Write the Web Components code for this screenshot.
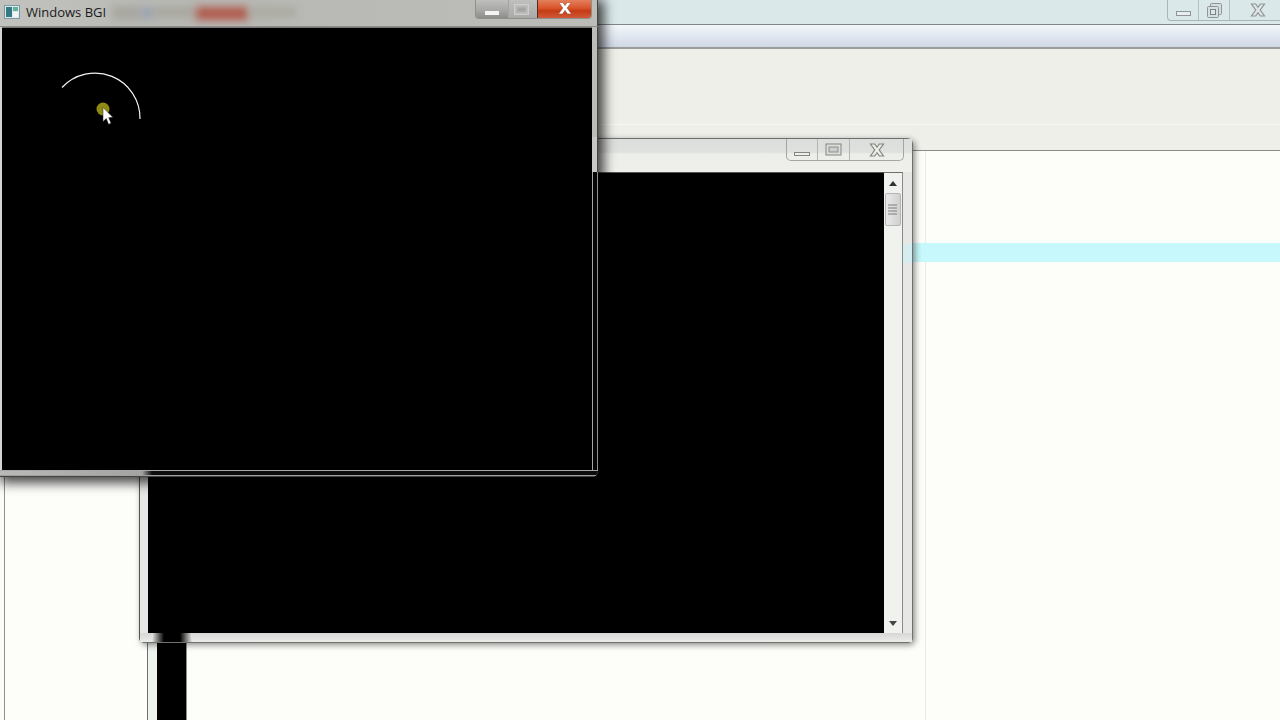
<!DOCTYPE html>
<html><head><meta charset="utf-8"><title>Windows BGI</title>
<style>html,body{margin:0;padding:0;background:#fdfefa;overflow:hidden}</style></head>
<body>
<x-desktop>
  <x-ide-window></x-ide-window>
  <x-console-window></x-console-window>
  <x-bgi-window title-text="Windows BGI"></x-bgi-window>
</x-desktop>
<script>
function def(name, css, html){
  customElements.define(name, class extends HTMLElement{
    constructor(){super();const r=this.attachShadow({mode:'open'});r.innerHTML='<style>'+css+'</style>'+(typeof html==='function'?html(this):html);}
  });
}
const XICON=(c,s)=>`<svg width="16" height="14" viewBox="0 0 16 14"><path d="M1.5 1H5.7L8 4.3L10.3 1H14.5L10.2 7L14.5 13H10.3L8 9.7L5.7 13H1.5L5.8 7Z" fill="${c}" stroke="${s}" stroke-width="1.2"/></svg>`;

def('x-desktop',`:host{display:block;position:relative;width:1280px;height:720px;overflow:hidden;font-family:"Open Sans","Noto Sans",sans-serif}`,`<slot></slot>`);

def('x-ide-window',`
:host{display:flex;flex-direction:column;position:absolute;inset:0;background:#fdfefa}
.title{height:24px;flex:none;background:#dbe8e9;border-bottom:1px solid #7f8788;display:flex;justify-content:flex-end;align-items:flex-start}
.btns{display:flex;height:20px;border:1px solid #a9b5b7;border-top:0;border-right:0;border-radius:0 0 0 4px;width:112px}
.btns div{display:flex;align-items:center;justify-content:center;border-right:1px solid #b4c0c2;box-sizing:border-box;height:20px}
.btns .mn{width:31px;padding-top:7px}.btns .mx{width:31px}.btns .cl{width:50px;border:0;padding-left:5px}
.bar{width:15px;height:5px;border:1px solid #8d9596;background:#e8eeee;box-sizing:border-box;display:block}
.tool{height:22px;flex:none;background:linear-gradient(#f3f6fa,#e6ecf3 35%,#d0d8e6);border-bottom:2px solid #9a9c9b}
.panel{height:101px;flex:none;background:#eeefe9;border-bottom:1px solid #8a8c8a}
.panel i{display:block;height:1px;background:#f8f8f3;margin-top:75px}
.editor{flex:1;display:flex;position:relative;background:#fdfefa}
.gut{width:4px;flex:none;border-right:1px solid #8f9290;background:#fbfcf8}
.code{flex:1;position:relative}
.v{position:absolute;left:920px;top:0;bottom:0;width:1px;background:#e9ebe6}
.hl{position:absolute;left:900px;right:0;top:92px;height:19px;background:#c7f8fb}
.pane{position:absolute;left:142px;top:480px;bottom:0;width:40px;display:flex;box-sizing:border-box;border-left:1px solid #6f716f;border-right:1px solid #8b8d8b}
.pane b{display:block;width:9px;background:#eef3ee}.pane u{display:block;flex:1;background:#000}
`,`<div class="title"><div class="btns"><div class="mn"><span class="bar"></span></div><div class="mx">
<svg width="17" height="17" viewBox="0 0 17 17"><rect x="4.5" y="1.5" width="11" height="11" rx="1" fill="#d5dfe0" stroke="#8d9596"/><rect x="1.5" y="4.5" width="11" height="11" rx="1" fill="#d5dfe0" stroke="#8d9596"/><rect x="4.5" y="7.5" width="5" height="5" fill="#dbe8e9" stroke="#7b8384"/></svg>
</div><div class="cl">${XICON('#dfe6e6','#8d9596')}</div></div></div>
<div class="tool"></div>
<div class="panel"><i></i></div>
<div class="editor"><div class="gut"></div><div class="code"><div class="v"></div><div class="hl"></div><div class="pane"><b></b><u></u></div></div></div>`);

def('x-scrollbar',`
:host{display:flex;flex-direction:column;width:19px;background:#f0f2ee;box-sizing:border-box;align-items:center;border-right:1px solid #8a8b89;border-top:1px solid #6e6f6d}
.a{height:20px;flex:none;display:flex;align-items:center;justify-content:center;padding-right:1px}
.t{flex:none;width:16px;height:33px;box-sizing:border-box;border:1px solid #b5b7b6;border-radius:2px;background:linear-gradient(90deg,#e8e9e8,#cfd0cf);display:flex;align-items:center;justify-content:center;margin-right:1px}
.s{flex:1}
`,`<div class="a"><svg width="8" height="5" viewBox="0 0 8 5"><path d="M4 0L8 5H0Z" fill="#333"/></svg></div>
<div class="t"><svg width="9" height="11" viewBox="0 0 9 11"><path d="M0 1H9M0 4H9M0 7H9M0 10H9" stroke="#7d7e7d" stroke-width="1"/></svg></div>
<div class="s"></div>
<div class="a"><svg width="8" height="5" viewBox="0 0 8 5"><path d="M0 0H8L4 5Z" fill="#444"/></svg></div>`);

def('x-console-window',`
:host{display:flex;flex-direction:column;position:absolute;left:139px;top:138px;width:774px;height:505px;box-sizing:border-box;background:#e7e8e5;border:1px solid #6f716e;border-left-color:#555;border-radius:5px 6px 5px 5px;box-shadow:2px 2px 6px rgba(0,0,0,.45)}
.title{height:33px;flex:none;display:flex;justify-content:flex-end;align-items:flex-start;padding-right:8px;background:linear-gradient(#dcdedb,#dfe1de 40%,#eceee9 45%,#eff0ec)}
.btns{display:flex;height:21px;border:1px solid #a5a6a3;border-top:0;border-radius:0 0 5px 5px}
.btns div{display:flex;align-items:center;justify-content:center;border-right:1px solid #b4b5b2;box-sizing:border-box;height:21px}
.mn{width:31px;padding-top:8px}.mx{width:32px}.cl{width:53px;border:0!important}
.bar{width:16px;height:4px;border:1px solid #85867f;background:#eee;box-sizing:border-box;display:block}
.body{flex:1;display:flex;padding:0 9px 0 8px;min-height:0;position:relative}
.con{flex:1;background:#000;border-top:1px solid #555}
.tint{position:absolute;right:0;top:72px;width:9px;height:19px;background:rgba(190,245,250,.45)}
.foot{height:9px;flex:none;position:relative;background:linear-gradient(#d7d8d5,#ebebe8)}
.foot i{position:absolute;left:12px;width:40px;top:0;bottom:0;background:linear-gradient(90deg,#e7e8e5,#000 30%,#000 70%,#e7e8e5)}
`,`<div class="title"><div class="btns"><div class="mn"><span class="bar"></span></div><div class="mx">
<svg width="17" height="13" viewBox="0 0 17 13"><rect x="1" y="1" width="15" height="11" fill="#dedfdc" stroke="#85867f"/><rect x="4" y="4" width="9" height="5" fill="#c8cdd0" stroke="#8d8e88"/></svg>
</div><div class="cl">${XICON('#eeeeea','#85867f')}</div></div></div>
<div class="body"><div class="con"></div><x-scrollbar></x-scrollbar><span class="tint"></span></div>
<div class="foot"><i></i></div>`);

def('x-bgi-window',`
:host{display:flex;flex-direction:column;position:absolute;left:0;top:0;width:598px;height:477px;box-sizing:border-box;background:#bcbdb9;border-radius:0 0 6px 0;overflow:hidden}
.title{height:27px;flex:none;position:relative;display:flex;align-items:center;gap:6px;padding:0 0 2px 4px;box-sizing:border-box;background:linear-gradient(90deg,#c2c3bf,#b7b8b4 30%,#bcbdb8);overflow:hidden;border-bottom:1px solid #8c8d8a;box-shadow:inset -1px 0 #444}
.ico{width:16px;height:14px;flex:none}
.t{font:13px/16px "Open Sans","Noto Sans",sans-serif;color:#1a1a1a;position:relative;white-space:nowrap}
.blur{position:absolute;filter:blur(4px)}
.btns{position:absolute;left:475px;top:0;display:flex;height:18px;border:1px solid #8f908d;border-top:0;border-radius:0 0 4px 4px;overflow:hidden}
.btns div{display:flex;align-items:center;justify-content:center;height:18px;box-sizing:border-box}
.mn{width:33px;border-right:1px solid #a4a5a2;background:linear-gradient(#bfc0bd,#a6a7a4 60%,#8c8d8b)}
.mx{width:29px;background:linear-gradient(#bfc0bd,#a9aaa7);border-right:1px solid #5a2b1c;padding-right:3px}
.cl{width:53px;background:linear-gradient(#e3805c,#d9552b 45%,#c53b14 60%,#d05a38)}
.bar{width:14px;height:4px;background:#f4f4f2;margin-top:8px;display:block}
.body{flex:1;display:flex;min-height:0}
.l{width:2px;background:#d4d5d2;flex:none}
.r{width:6px;flex:none;background:
  linear-gradient(transparent 145px,#a6a6a6 145px) left/1px 100% no-repeat,
  linear-gradient(#444 0 145px,#8e8e8e 145px) right/1px 100% no-repeat,
  linear-gradient(#bcbdb9 0,#bcbdb9 110px,#c8c9c6 110px,#c8c9c6 145px,#050505 145px) left/5px 100% no-repeat}
.c{flex:1;background:#000;position:relative;border-top:1px solid #777}
svg.g{position:absolute;left:-2px;top:-28px;width:200px;height:150px;overflow:visible}
.foot{height:7px;flex:none;background:
  linear-gradient(#a8a8a8 1px,transparent 1px,transparent 5px,#a0a0a0 5px,#a0a0a0 6px,#444 6px),
  linear-gradient(90deg,#b9bab7,#a3a4a1 142px,#0c0c0c 152px,#0c0c0c 100%)}
`,h=>`<div class="title">
<svg class="ico" viewBox="0 0 16 14"><rect x=".5" y=".5" width="15" height="13" fill="#dfe9ea" stroke="#7e9aa0"/><rect x="2" y="2" width="6" height="10" fill="#347a86"/><rect x="9" y="2" width="5" height="4" fill="#5fb39a"/><rect x="9" y="7" width="5" height="5" fill="#f2f5f5"/></svg>
<span class="t">${h.getAttribute('title-text')}</span>
<i class="blur" style="left:112px;top:6px;width:28px;height:14px;background:#a8a69e"></i>
<i class="blur" style="left:140px;top:8px;width:14px;height:10px;background:#96a0ac"></i>
<i class="blur" style="left:154px;top:8px;width:40px;height:8px;background:#a5a299"></i>
<i class="blur" style="left:196px;top:7px;width:52px;height:13px;background:#b0584a"></i>
<i class="blur" style="left:250px;top:8px;width:46px;height:8px;background:#a8a69c"></i>
<div class="btns"><div class="mn"><span class="bar"></span></div><div class="mx"><svg width="15" height="11" viewBox="0 0 15 11"><rect x=".5" y=".5" width="14" height="10" fill="#bdbebb" stroke="#cfd0cd"/><rect x="3" y="3" width="9" height="5" fill="#a5a6a3" stroke="#b5b6b3"/></svg></div>
<div class="cl"><svg width="14" height="13" viewBox="0 0 14 13"><path d="M0.5 -1H4.5L7 2.5L9.5 -1H13.5L9.2 5L13.5 11H9.5L7 7.5L4.5 11H.5L4.8 5Z" fill="#fff" stroke="#9c4a30" stroke-width=".6"/></svg></div></div>
</div>
<div class="body"><div class="l"></div><div class="c">
<svg class="g" viewBox="0 0 200 150"><path d="M62 87.5A45 45 0 0 1 140 119" fill="none" stroke="#f1f1f1" stroke-width="1.2"/><circle cx="103" cy="109" r="6.5" fill="#8f8a12"/><path d="M103 107.5V121.5L106.3 118.6L108.6 124.3L111 123.2L108.7 117.7L112.8 117.3Z" fill="#fff" stroke="#222" stroke-width=".5"/></svg>
</div><div class="r"></div></div>
<div class="foot"></div>`);
// the drop shadow sits on the element's own box: overflow:hidden on the host does not clip it
document.querySelector('x-bgi-window').style.boxShadow='3px 3px 12px 3px rgba(0,0,0,.72)';
</script>
</body></html>
